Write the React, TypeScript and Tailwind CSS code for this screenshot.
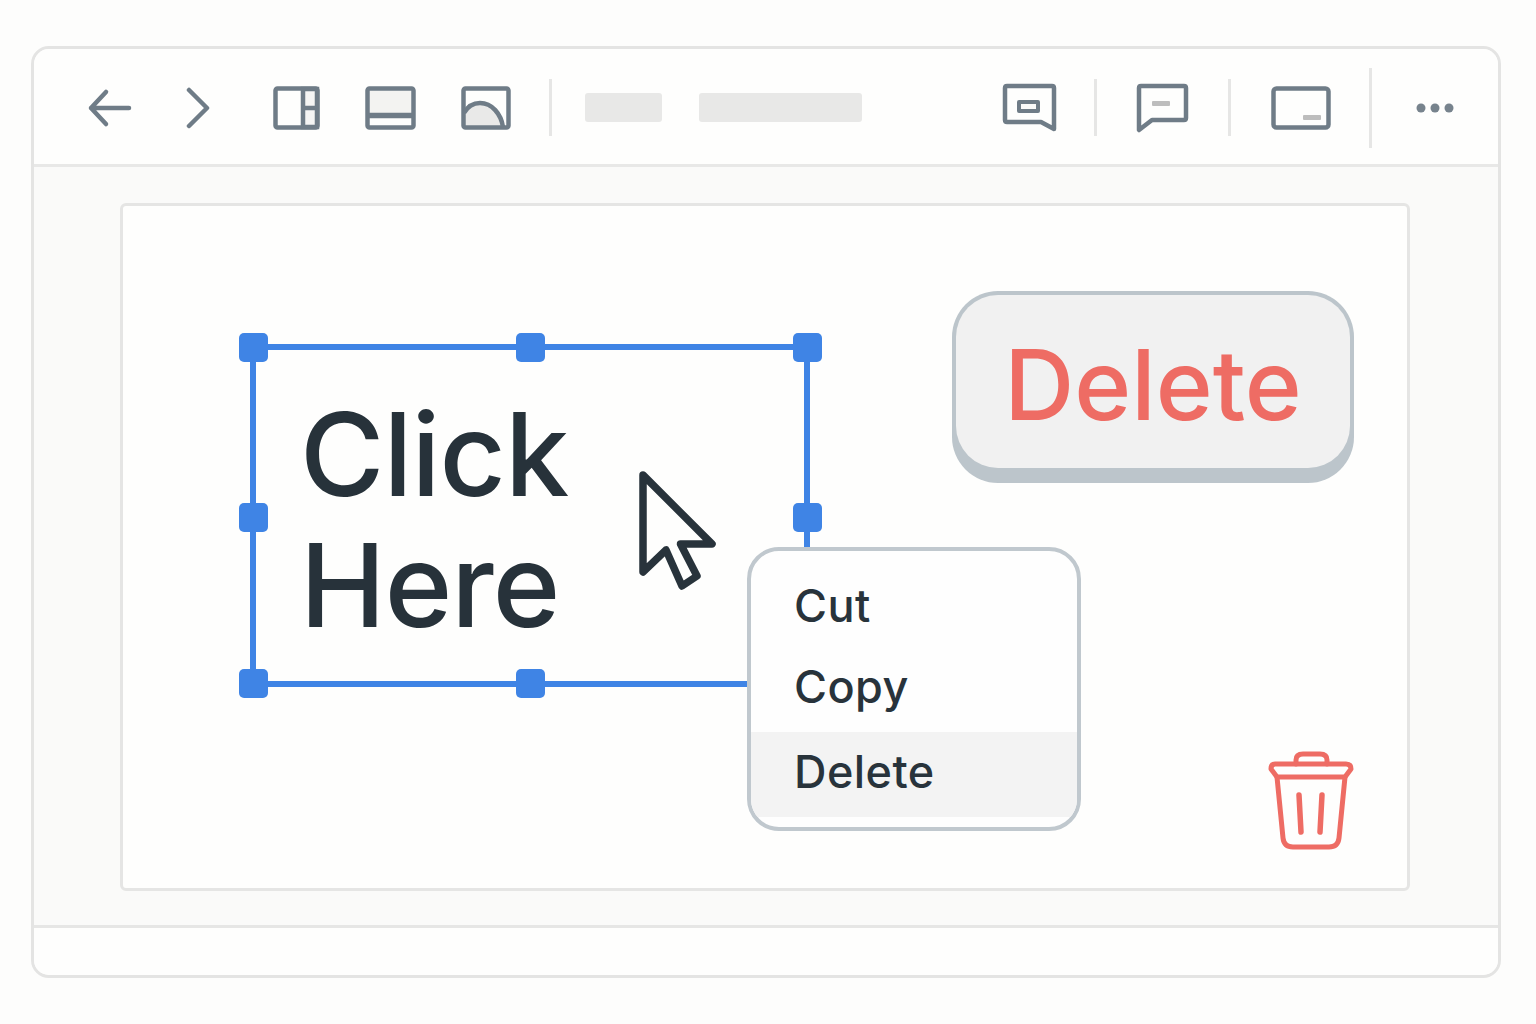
import React from "react";

const ICON = "#6f7c87";
const RED = "#ee6c64";
const INK = "#28333b";

function Divider({ className }: { className: string }) {
  return <div className={`w-[3px] shrink-0 bg-[#e6e6e5] ${className}`} />;
}

function Handle({ className }: { className: string }) {
  return <div className={`absolute h-[29px] w-[29px] rounded-[5px] bg-[#3f84e5] ${className}`} />;
}

export default function App() {
  return (
    <div className="h-[1024px] w-[1536px] overflow-hidden bg-[#fdfdfc] pl-[31px] pt-[46px] [font-family:Inter,sans-serif]">
      <div className="flex h-[932px] w-[1470px] flex-col overflow-hidden rounded-[18px] border-[3px] border-[#e4e4e3] bg-[#fafaf9]">
        {/* toolbar */}
        <div className="flex h-[118px] shrink-0 items-center border-b-[3px] border-[#e8e8e7] bg-[#fefefd] pl-[52px] pt-[2px]">
          <svg width="46" height="40" viewBox="0 0 46 40" fill="none" stroke={ICON} strokeWidth="4.500" strokeLinecap="round" strokeLinejoin="round">
            <path d="M5 20H43M20 4 5 20 20 36" />
          </svg>
          <svg className="ml-[53px]" width="26" height="42" viewBox="0 0 26 42" fill="none" stroke={ICON} strokeWidth="4.500" strokeLinecap="round" strokeLinejoin="round">
            <path d="M4 3 22 21 4 39" />
          </svg>
          <svg className="ml-[62px]" width="47" height="44" viewBox="0 0 47 44" fill="none" stroke={ICON} strokeWidth="4.500">
            <path d="M30 3H44V22H30ZM30 22H44V41H30Z" fill="#f5f5f4" />
            <rect x="2.500" y="2.500" width="42" height="39" rx="2" />
          </svg>
          <svg className="ml-[45px]" width="51" height="44" viewBox="0 0 51 44" fill="none" stroke={ICON} strokeWidth="4.500">
            <rect x="3" y="3" width="45" height="27" fill="#f3f3f1" stroke="none" />
            <rect x="2.500" y="2.500" width="46" height="39" rx="2" />
            <path d="M3 29.500H48" strokeWidth="5.500" />
          </svg>
          <svg className="ml-[45px]" width="50" height="44" viewBox="0 0 50 44" fill="none" stroke={ICON} strokeWidth="4.500">
            <path d="M4 40V26C8 20 13 17 19 17C31 17 40 28 42 40Z" fill="#e9e9e8" stroke="none" />
            <rect x="2.500" y="2.500" width="45" height="39" rx="2" />
            <path d="M3 27C7 20 13 17 19 17C31 17 40 28 42 41" />
          </svg>
          <Divider className="ml-[38px] h-[57px]" />
          <div className="ml-[33px] h-[29px] w-[77px] rounded-[3px] bg-[#e8e8e7]" />
          <div className="ml-[37px] h-[29px] w-[163px] rounded-[3px] bg-[#e8e8e7]" />
          <svg className="ml-[140px]" width="55" height="50" viewBox="0 0 55 50" fill="none" stroke={ICON} strokeWidth="4.500" strokeLinejoin="round">
            <path d="M5 3H50Q52 3 52 5V46L39 39H5Q3 39 3 37V5Q3 3 5 3Z" />
            <rect x="17" y="19" width="19" height="9" strokeWidth="4" fill="#fafafa" />
          </svg>
          <Divider className="ml-[37px] h-[57px]" />
          <svg className="ml-[39px]" width="53" height="50" viewBox="0 0 53 50" fill="none" stroke={ICON} strokeWidth="4.500" strokeLinejoin="round">
            <path d="M5 3H48Q50 3 50 5V35Q50 37 48 37H16L3 47V5Q3 3 5 3Z" />
            <rect x="16" y="18" width="18" height="5" rx="1" fill="#bdbdbd" stroke="none" />
          </svg>
          <Divider className="ml-[39px] h-[57px]" />
          <svg className="ml-[40px]" width="60" height="44" viewBox="0 0 60 44" fill="none" stroke={ICON} strokeWidth="4.500">
            <rect x="2.500" y="2.500" width="55" height="39" rx="3" />
            <rect x="32" y="29" width="18" height="5" rx="1" fill="#bdbdbd" stroke="none" />
          </svg>
          <Divider className="ml-[38px] h-[80px]" />
          <svg className="ml-[44px]" width="38" height="10" viewBox="0 0 38 10" fill="#77838d">
            <circle cx="5" cy="5" r="4.500" />
            <circle cx="19" cy="5" r="4.500" />
            <circle cx="33" cy="5" r="4.500" />
          </svg>
        </div>

        {/* body */}
        <div className="flex-1 px-[86px] pt-[36px]">
          <div className="relative h-[688px] w-[1290px] rounded-[6px] border-[3px] border-[#e5e5e4] bg-[#fefefd]">
            {/* selection */}
            <div className="absolute left-[127px] top-[138px] flex h-[343px] w-[560px] flex-col justify-center border-[6px] border-[#3f84e5] pl-[44px] pt-[9px] text-[115px] font-[540] leading-[131px] tracking-[-0.008em] text-[#27323a]">
              <div>Click</div>
              <div>Here</div>
              <Handle className="-left-[17px] -top-[17px]" />
              <Handle className="left-[260px] -top-[17px]" />
              <Handle className="-right-[18px] -top-[17px]" />
              <Handle className="-left-[17px] top-[153px]" />
              <Handle className="-right-[18px] top-[153px]" />
              <Handle className="-left-[17px] -bottom-[17px]" />
              <Handle className="left-[260px] -bottom-[17px]" />
            </div>

            {/* pointer */}
            <svg className="absolute left-[512px] top-[262px]" width="84" height="122" viewBox="0 0 84 122" fill="#fefefd" stroke={INK} strokeWidth="7.500" strokeLinejoin="round">
              <path d="M8 7 77 76 45.500 76 62 108 47 118 31 82 8 104Z" />
            </svg>

            {/* delete button */}
            <div className="absolute left-[829px] top-[85px] h-[192px] w-[402px] rounded-[46px] bg-[#bcc5cb] p-[4px] pb-[15px]">
              <div className="flex h-full items-center justify-center rounded-[42px] bg-[#f1f1f1] pt-[6px] text-[97px] font-[550] text-[#ee6c64]">
                Delete
              </div>
            </div>

            {/* context menu */}
            <div className="absolute left-[624px] top-[341px] h-[284px] w-[334px] overflow-hidden rounded-[32px] border-4 border-[#c0c8ce] bg-[#fefefe] pt-[15px] text-[45px] font-medium leading-[80px] tracking-[0.01em] text-[#28333b]">
              <div className="h-[81px] pl-[43px]">Cut</div>
              <div className="h-[85px] pl-[43px]">Copy</div>
              <div className="h-[85px] bg-[#f3f3f3] pl-[43px]">Delete</div>
            </div>

            {/* trash */}
            <svg className="absolute left-[1143px] top-[542px]" width="90" height="104" viewBox="0 0 90 104" fill="none" stroke={RED} strokeWidth="5" strokeLinecap="round" strokeLinejoin="round">
              <path d="M30 16V12Q30 6 37 6H54Q61 6 61 12V16" />
              <path d="M9 16H80Q85 16 85 21L79 29H11L5 21Q5 16 9 16Z" />
              <path d="M11 29 17 90Q18 99 27 99H63Q72 99 73 90L79 29" />
              <path d="M33 47 35 84M56 47 54 84" strokeWidth="5.500" />
            </svg>
          </div>
        </div>

        {/* footer */}
        <div className="h-[50px] shrink-0 border-t-[3px] border-[#e6e6e5] bg-[#fefefd]" />
      </div>
    </div>
  );
}
